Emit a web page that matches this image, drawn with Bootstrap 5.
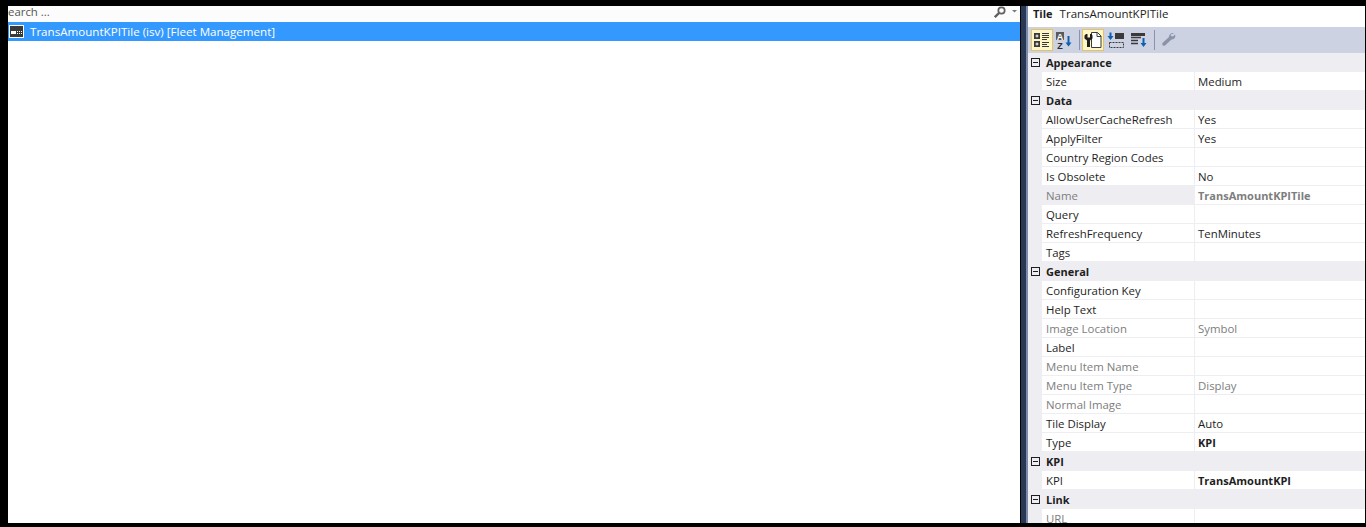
<!DOCTYPE html>
<html lang="en">
<head>
    <meta charset="UTF-8">
    <title>Tile properties</title>
    <link href="https://cdn.jsdelivr.net/npm/bootstrap@5.3.0/dist/css/bootstrap.min.css" rel="stylesheet">
    <style>
        html, body { height: 100%; }
        body {
            background: #000;
            overflow: hidden;
            font-family: "Open Sans", "Liberation Sans", sans-serif;
            font-size: 11.4px;
            line-height: 16px;
            color: #1e1e1e;
        }
        b, .bold-val, .group-row { font-size: 11px; font-weight: 700; }
        .frame { height: 527px; padding: 6px 1px 4px 8px; }
        .left-pane { width: 1012px; background: #fff; }
        .search-box { height: 16px; color: #555; background: #fcfcfc; flex-shrink: 0; line-height: 12px; }
        .result-row { height: 19px; background: #3399ff; color: #fff; padding-left: 1px; gap: 6px; flex-shrink: 0; font-size: 11.6px; }
        .splitter { width: 8px; background: #293955; border-left: 1px solid #000; border-right: 2px solid #7d8bab; }
        .right-pane { flex: 1; background: #fff; overflow: hidden; }
        .title-bar { height: 21px; padding-left: 5px; gap: 7px; flex-shrink: 0; font-size: 11.5px; }
        .tool-bar { height: 26px; background: #ccd2e2; padding-left: 3px; flex-shrink: 0; }
        .tool-btn { width: 22px; height: 22px; flex-shrink: 0; }
        .tool-btn svg { display: block; }
        .tool-btn.on { background: #fff6c6; box-shadow: inset 0 0 0 1px #e5c365; }
        .tool-btn.next { margin-left: 1px; }
        .tool-sep { width: 1px; height: 20px; background: #8a93a8; margin: 0 2px 0 4px; }
        #grid { flex-shrink: 0; background: #eeeef2; }
        .group-row { height: 19px; line-height: 18px; }
        .toggle-box { width: 14px; }
        .toggle-box svg { display: block; margin-left: 3px; }
        .prop-row { height: 19px; margin-left: 14px; background: #fff; border-bottom: 1px solid #eeeef2; line-height: 20px; }
        .prop-name { width: 153px; padding-left: 4px; border-right: 1px solid #eeeef2; }
        .prop-val { padding-left: 3px; }
        .muted-row { color: #7d7d7d; }
        .picked-row .prop-name { background: #eeeef2; }
        .az-text { font: 700 9px "Liberation Sans", sans-serif; }
    </style>
</head>
<body>
<div class="frame d-flex">
    <div class="left-pane d-flex flex-column">
        <div class="search-box d-flex justify-content-between">
            <div>earch ...</div>
            <svg width="26" height="16" viewBox="0 0 26 16">
                <circle cx="7.500" cy="4.500" r="3.200" fill="none" stroke="#5f5f5f" stroke-width="1.700"/>
                <path d="M5 7 .8 11.200" stroke="#5f5f5f" stroke-width="2.400"/>
                <path d="M18 4h5l-2.500 2.500z" fill="#7a7a7a"/>
            </svg>
        </div>
        <div class="result-row d-flex align-items-center">
            <svg width="15" height="13" viewBox="0 0 15 13">
                <rect x="0.5" y="0.5" width="14" height="12" fill="#3a3a3a" stroke="#fff"/>
                <path d="M2 6h5v3H2zM8 6h1v1H8zM10 6h1v1h-1zM12 6h1v1h-1zM8 8h1v1H8zM10 8h1v1h-1zM12 8h1v1h-1z" fill="#fff"/>
            </svg>
            <span>TransAmountKPITile (isv) [Fleet Management]</span>
        </div>
    </div>
    <div class="splitter"></div>
    <div class="right-pane d-flex flex-column">
        <div class="title-bar d-flex"><b>Tile</b><span>TransAmountKPITile</span></div>
        <div class="tool-bar d-flex align-items-center">
            <div class="tool-btn on">
                <svg width="22" height="22" viewBox="0 0 22 22">
                    <path d="M3 4h6v6H3zM3 12h6v6H3z" fill="#3a3a3a"/>
                    <path d="M4.500 7h3M6 5.500v3M4.500 15h3M6 13.500v3" stroke="#fff"/>
                    <path d="M11 4.500h7M11 6.500h7M11 8.500h7M11 10.500h5M11 13.500h7M11 15.500h5M11 17.500h7" stroke="#3a3a3a"/>
                </svg>
            </div>
            <div class="tool-btn">
                <svg width="22" height="22" viewBox="0 0 22 22">
                    <rect x="3" y="3" width="8" height="8" fill="#5a5a5a"/>
                    <text class="az-text" x="7" y="10.500" text-anchor="middle" fill="#fff">A</text>
                    <text class="az-text" x="7" y="19.500" text-anchor="middle" fill="#2d2d2d">Z</text>
                    <path d="M15.500 7v9" stroke="#0e5fb0" stroke-width="2"/>
                    <path d="M12.500 13.500h6l-3 4z" fill="#0e5fb0"/>
                </svg>
            </div>
            <div class="tool-sep"></div>
            <div class="tool-btn on">
                <svg width="22" height="22" viewBox="0 0 22 22">
                    <path d="M9.500 3.500h6l3.500 3.500v11.500h-9.500z" fill="#fff" stroke="#3a3a3a"/>
                    <path d="M15 3.500v4h4" fill="none" stroke="#3a3a3a"/>
                    <path d="M4 5h1.500v3.500h2.500V5h1.500l1 1.500v3l-2.500 2v6.500H5v-6.500l-2.500-2v-3z" fill="#1e1e1e"/>
                </svg>
            </div>
            <div class="tool-btn next">
                <svg width="22" height="22" viewBox="0 0 22 22">
                    <path d="M5.500 3.500v6" stroke="#0e5fb0" stroke-width="2"/>
                    <path d="M2.500 7h6l-3 4z" fill="#0e5fb0"/>
                    <rect x="10" y="4" width="9" height="6" fill="#3a3a3a"/>
                    <rect x="4.500" y="13.500" width="14" height="5" fill="none" stroke="#3a3a3a" stroke-dasharray="2 1"/>
                </svg>
            </div>
            <div class="tool-btn next">
                <svg width="22" height="22" viewBox="0 0 22 22">
                    <rect x="3" y="4" width="14" height="3" fill="#3a3a3a"/>
                    <path d="M3 8.500h10M3 11.500h7M3 14.500h7" stroke="#3a3a3a" stroke-width="1.500" fill="none"/>
                    <path d="M15.500 9v7" stroke="#0e5fb0" stroke-width="2"/>
                    <path d="M12.500 14h6l-3 4z" fill="#0e5fb0"/>
                </svg>
            </div>
            <div class="tool-sep"></div>
            <div class="tool-btn">
                <svg width="22" height="22" viewBox="0 0 22 22">
                    <path d="M17 4.500a3.500 3.500 0 0 0-5 3.500l-6.500 6a1.800 1.800 0 0 0 2.500 2.500l6.500-6a3.500 3.500 0 0 0 3.500-5l-2 2-2-.5-.5-1.500z" fill="#8a93a8"/>
                </svg>
            </div>
        </div>
        <div id="grid"></div>
    </div>
</div>
<script>
    const rows = [
        ['Appearance'],
        ['Size', 'Medium'],
        ['Data'],
        ['AllowUserCacheRefresh', 'Yes'],
        ['ApplyFilter', 'Yes'],
        ['Country Region Codes', ''],
        ['Is Obsolete', 'No'],
        ['Name', 'TransAmountKPITile', 'picked muted bold'],
        ['Query', ''],
        ['RefreshFrequency', 'TenMinutes'],
        ['Tags', ''],
        ['General'],
        ['Configuration Key', ''],
        ['Help Text', ''],
        ['Image Location', 'Symbol', 'muted'],
        ['Label', ''],
        ['Menu Item Name', '', 'muted'],
        ['Menu Item Type', 'Display', 'muted'],
        ['Normal Image', '', 'muted'],
        ['Tile Display', 'Auto'],
        ['Type', 'KPI', 'bold'],
        ['KPI'],
        ['KPI', 'TransAmountKPI', 'bold'],
        ['Link'],
        ['URL', '', 'muted']
    ];
    const toggle = '<svg width="9" height="9" viewBox="0 0 9 9"><rect x="0.5" y="0.5" width="8" height="8" fill="none" stroke="#1e1e1e"/><path d="M2 4.500h5" stroke="#1e1e1e"/></svg>';
    document.getElementById('grid').innerHTML = rows.map(r => {
        if (r.length === 1) {
            return `<div class="group-row d-flex align-items-center"><div class="toggle-box">${toggle}</div><div class="ps-1">${r[0]}</div></div>`;
        }
        const flags = r[2] || '';
        const cls = (flags.includes('muted') ? ' muted-row' : '') + (flags.includes('picked') ? ' picked-row' : '');
        const val = flags.includes('bold') ? ' bold-val' : '';
        return `<div class="prop-row d-flex${cls}"><div class="prop-name">${r[0]}</div><div class="prop-val${val}">${r[1]}</div></div>`;
    }).join('');
</script>
</body>
</html>
